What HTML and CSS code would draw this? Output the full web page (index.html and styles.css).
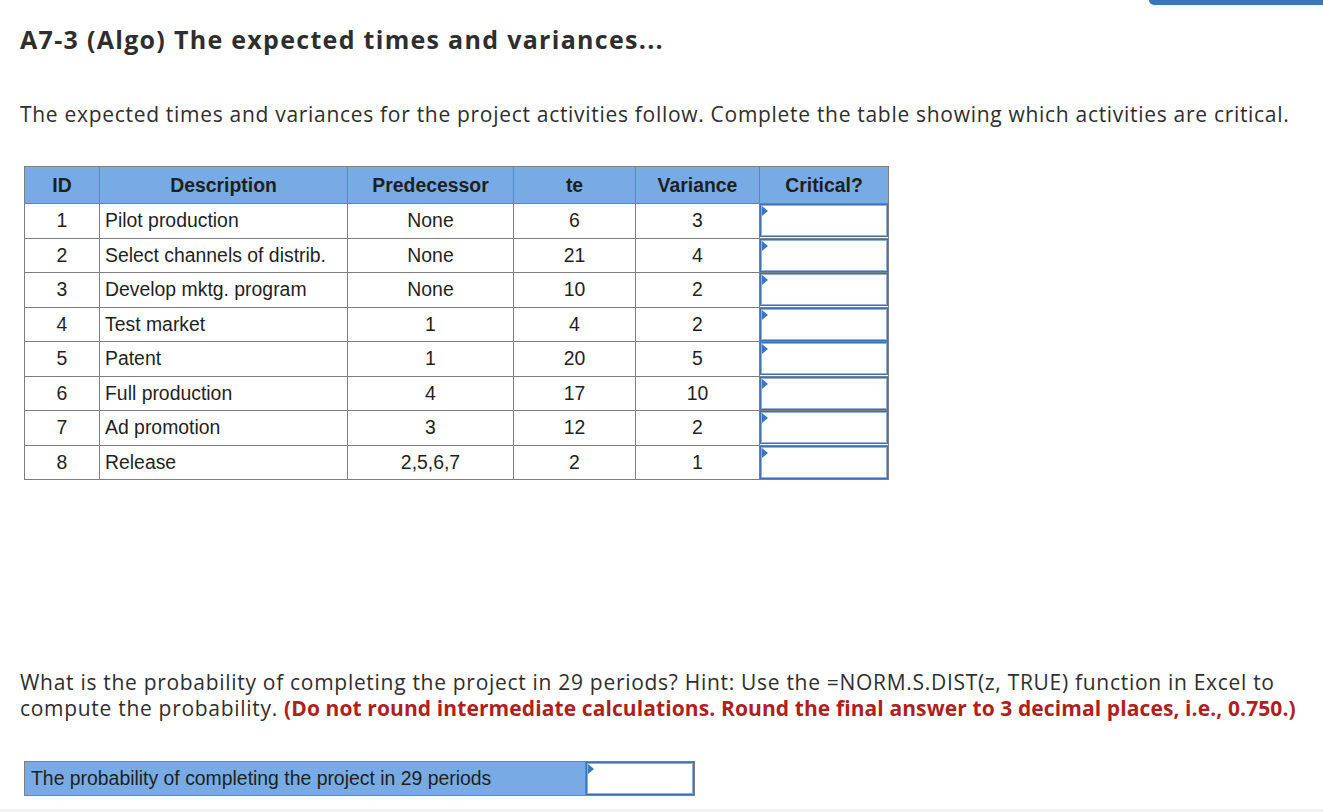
FILE: index.html
```html
<!DOCTYPE html>
<html>
<head>
<meta charset="utf-8">
<link rel="stylesheet" href="styles.css">
</head>
<body>
<div class="topbar"></div>
<main class="page">
  <h1 class="title">A7-3 (Algo) The expected times and variances...</h1>
  <p class="intro">The expected times and variances for the project activities follow. Complete the table showing which activities are critical.</p>

  <table class="grid">
    <colgroup>
      <col class="c-id"><col class="c-desc"><col class="c-pred"><col class="c-te"><col class="c-var"><col class="c-crit">
    </colgroup>
    <thead>
      <tr><th>ID</th><th>Description</th><th>Predecessor</th><th>te</th><th>Variance</th><th>Critical?</th></tr>
    </thead>
    <tbody>
      <tr><td>1</td><td class="desc">Pilot production</td><td>None</td><td>6</td><td>3</td><td class="inp"><div class="box"></div></td></tr>
      <tr><td>2</td><td class="desc">Select channels of distrib.</td><td>None</td><td>21</td><td>4</td><td class="inp"><div class="box"></div></td></tr>
      <tr><td>3</td><td class="desc">Develop mktg. program</td><td>None</td><td>10</td><td>2</td><td class="inp"><div class="box"></div></td></tr>
      <tr><td>4</td><td class="desc">Test market</td><td>1</td><td>4</td><td>2</td><td class="inp"><div class="box"></div></td></tr>
      <tr><td>5</td><td class="desc">Patent</td><td>1</td><td>20</td><td>5</td><td class="inp"><div class="box"></div></td></tr>
      <tr><td>6</td><td class="desc">Full production</td><td>4</td><td>17</td><td>10</td><td class="inp"><div class="box"></div></td></tr>
      <tr><td>7</td><td class="desc">Ad promotion</td><td>3</td><td>12</td><td>2</td><td class="inp"><div class="box"></div></td></tr>
      <tr><td>8</td><td class="desc">Release</td><td>2,5,6,7</td><td>2</td><td>1</td><td class="inp"><div class="box"></div></td></tr>
    </tbody>
  </table>

  <p class="question">What is the probability of completing the project in 29 periods? Hint: Use the =NORM.S.DIST(z, TRUE) function in Excel to compute the probability. <strong class="warn">(Do not round intermediate calculations. Round the final answer to 3 decimal places, i.e., 0.750.)</strong></p>

  <table class="answer">
    <tr><td class="label">The probability of completing the project in 29 periods</td><td class="inp"><div class="box"></div></td></tr>
  </table>
</main>
<div class="footbar"></div>
</body>
</html>
```
FILE: styles.css
```css
html, body {
  margin: 0;
  padding: 0;
  background: #ffffff;
}
body {
  width: 1323px;
  height: 812px;
  overflow: hidden;
  position: relative;
  font-family: "Open Sans", "Lato", sans-serif;
  color: #2b2b2b;
}
.topbar {
  position: absolute;
  top: 0;
  right: 0;
  width: 174px;
  height: 5px;
  background: #3a76b9;
  border-bottom-left-radius: 5px;
}
.footbar {
  position: absolute;
  left: 0;
  right: 0;
  bottom: 0;
  height: 3px;
  background: #f1f1f1;
}
.page {
  padding: 23px 0 0 20px;
}
.title {
  margin: 0;
  font-size: 25px;
  line-height: 32px;
  font-weight: 700;
  letter-spacing: 1.3px;
  color: #2e2e2e;
}
.intro {
  margin: 46px 0 0 0;
  font-size: 21px;
  line-height: 26px;
  letter-spacing: 0.7px;
  color: #2e2e2e;
}
.grid, .answer {
  border-collapse: collapse;
  font-family: "Liberation Sans", Arial, sans-serif;
  font-size: 19.4px;
  color: #1f1f1f;
  margin-left: 4px;
}
.grid {
  margin-top: 39px;
  table-layout: fixed;
  width: 865px;
}
.c-id { width: 75px; }
.c-desc { width: 248px; }
.c-pred { width: 166px; }
.c-te { width: 122px; }
.c-var { width: 124px; }
.c-crit { width: 129px; }
.grid th, .grid td {
  border: 1px solid #7f7f7f;
  text-align: center;
  padding: 0;
}
.grid th {
  background: #78abe4;
  height: 36px;
  font-weight: 700;
}
.grid td {
  height: 33.5px;
}
.grid td.desc {
  text-align: left;
  padding-left: 5px;
}
td.inp {
  padding: 0;
  position: relative;
}
.box {
  box-sizing: border-box;
  border: 1px solid #3d72b6;
  box-shadow: inset 0 0 0 1px #8db2df;
  background: #fff;
  position: relative;
}
.grid .box {
  height: 33px;
}
.box::before {
  content: "";
  position: absolute;
  left: 1px;
  top: 1px;
  width: 0;
  height: 0;
  border-top: 5px solid transparent;
  border-bottom: 5px solid transparent;
  border-left: 6px solid #3b78c4;
}
.question {
  margin: 189px 0 0 0;
  font-size: 21px;
  line-height: 26px;
  letter-spacing: 0.7px;
  color: #2e2e2e;
  width: 1300px;
}
.warn {
  color: #b01e1e;
  font-weight: 700;
  letter-spacing: 0.1px;
}
.answer {
  margin-top: 40px;
  width: 669px;
  table-layout: fixed;
}
.answer td {
  border: 1px solid #7f7f7f;
  height: 33px;
  padding: 0;
}
.answer td.label {
  width: 554px;
  background: #78abe4;
  padding-left: 6px;
  text-align: left;
}
.answer td.inp {
  width: 108px;
}
.answer .box {
  height: 33px;
}
```
